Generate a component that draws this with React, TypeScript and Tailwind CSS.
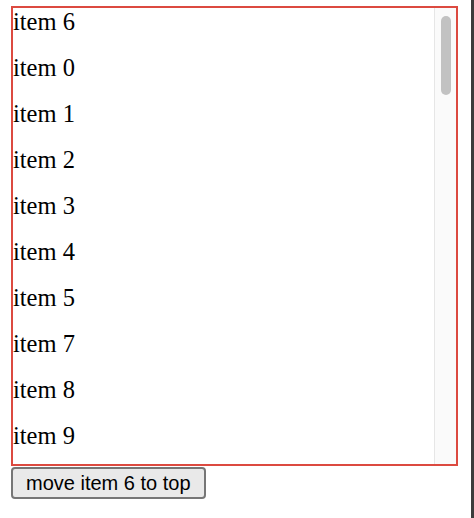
const items = [6, 0, 1, 2, 3, 4, 5, 7, 8, 9];

export default function App() {
  return (
    <div className="flex h-[518px] w-[474px] bg-white">
      <div className="flex-1 pl-[11px] pt-[6px]">
        <div className="flex h-[460px] w-[447px] border-2 border-[#dc4a40]">
          <ul className="flex-1 overflow-hidden font-['Liberation_Serif',serif] text-[24.5px] leading-[28px] text-black">
            {items.map((n) => (
              <li key={n} className="h-[46px]">
                item {n}
              </li>
            ))}
          </ul>
          <div className="flex w-[22px] justify-center border-l border-[#e6e6e6] bg-[#fafafa] pt-[8px]">
            <div className="h-[79px] w-[10px] rounded-full bg-[#c2c2c2]" />
          </div>
        </div>
        <button className="mt-[1px] h-[32px] rounded-[4px] border-2 border-[#767676] bg-[#e9e9e9] px-[13px] font-['Liberation_Sans',sans-serif] text-[20px] leading-none text-black">
          move item 6 to top
        </button>
      </div>
      <div className="h-full w-[3px] bg-[#3c3c3c]" />
    </div>
  );
}
